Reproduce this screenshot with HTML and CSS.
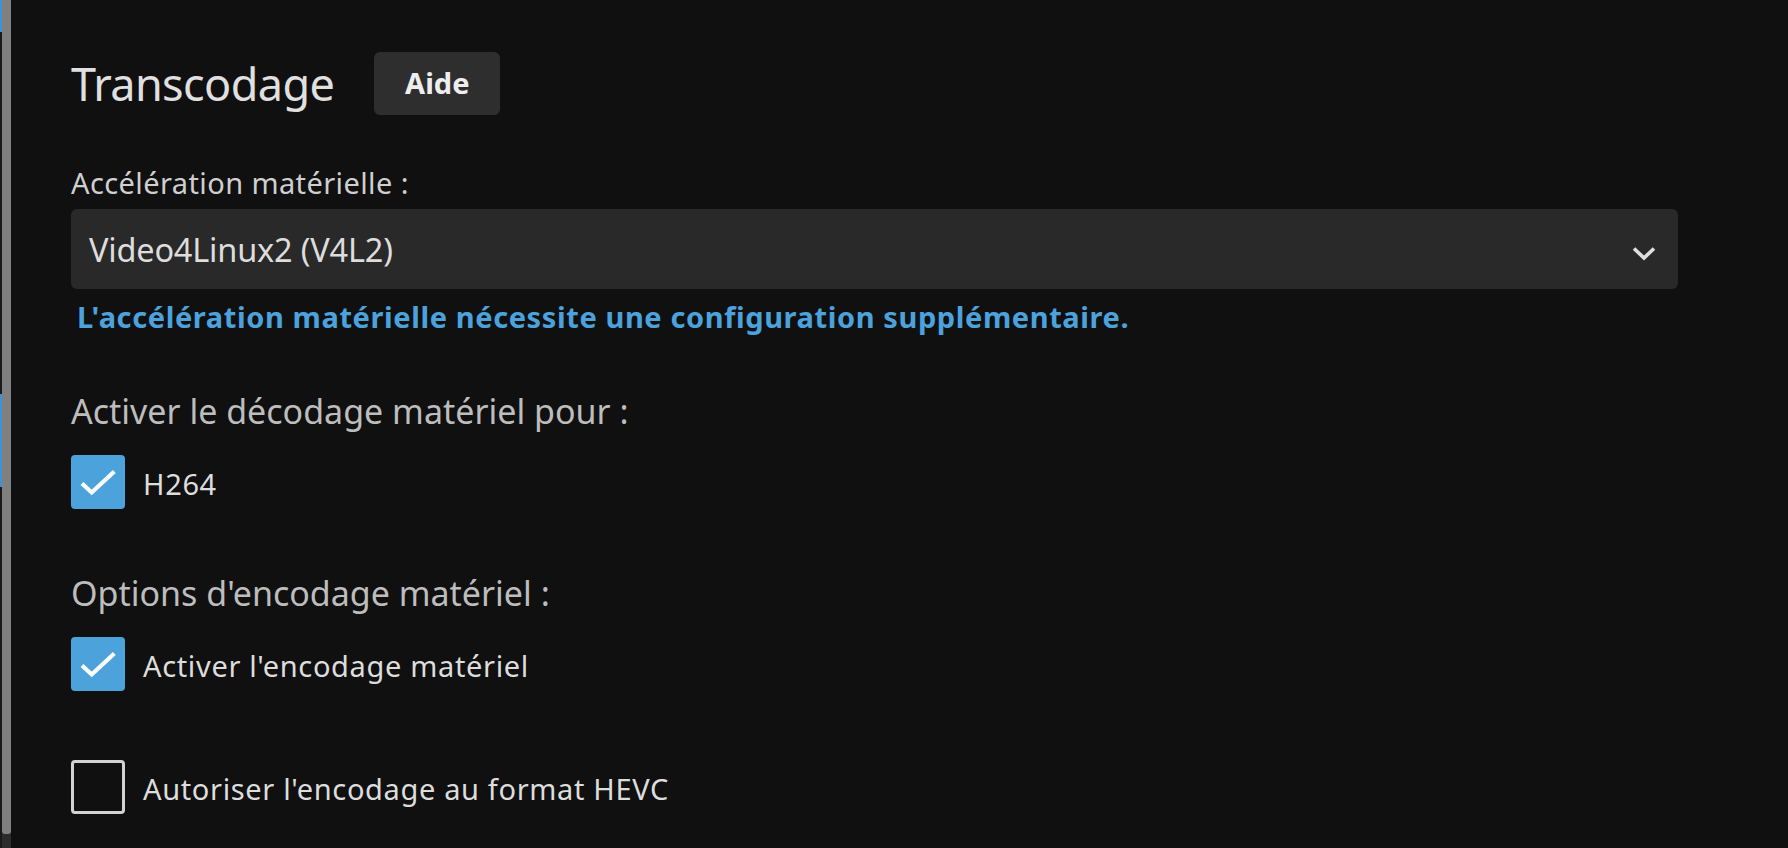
FILE: index.html
```html
<!DOCTYPE html>
<html lang="fr">
<head>
<meta charset="utf-8">
<title>Transcodage</title>
<link rel="stylesheet" href="styles.css">
</head>
<body>
<div class="shell">
  <div class="rail">
    <div class="rail-mark rail-mark-top"></div>
    <div class="rail-gap rail-gap-a"></div>
    <div class="rail-mark rail-mark-mid"></div>
    <div class="rail-gap"></div>
  </div>
  <div class="scrollbar">
    <div class="scroll-thumb"></div>
    <div class="scroll-track"></div>
  </div>
  <main class="content">
    <div class="title-row">
      <h2 class="section-title">Transcodage</h2>
      <button class="help-button" type="button">Aide</button>
    </div>

    <div class="field">
      <label class="field-label">Accélération matérielle :</label>
      <div class="select">
        <span class="select-value">Video4Linux2 (V4L2)</span>
        <svg class="select-arrow" width="24" height="15" viewBox="0 0 24 15" aria-hidden="true">
          <polyline points="2,2.5 12,12 22,2.5" fill="none" stroke="#dedede" stroke-width="3.6"/>
        </svg>
      </div>
      <div class="field-description">L'accélération matérielle nécessite une configuration supplémentaire.</div>
    </div>

    <fieldset class="group">
      <h3 class="group-title">Activer le décodage matériel pour :</h3>
      <div class="check-row">
        <span class="checkbox checked">
          <svg width="54" height="54" viewBox="0 0 54 54" aria-hidden="true">
            <polyline points="11,28.5 20.7,37.5 43.3,16.5" fill="none" stroke="#ffffff" stroke-width="4.2"/>
          </svg>
        </span>
        <span class="check-label">H264</span>
      </div>
    </fieldset>

    <fieldset class="group group-encoding">
      <h3 class="group-title">Options d'encodage matériel :</h3>
      <div class="check-row">
        <span class="checkbox checked">
          <svg width="54" height="54" viewBox="0 0 54 54" aria-hidden="true">
            <polyline points="11,28.5 20.7,37.5 43.3,16.5" fill="none" stroke="#ffffff" stroke-width="4.2"/>
          </svg>
        </span>
        <span class="check-label">Activer l'encodage matériel</span>
      </div>
      <div class="check-row check-row-spaced">
        <span class="checkbox unchecked"></span>
        <span class="check-label">Autoriser l'encodage au format HEVC</span>
      </div>
    </fieldset>
  </main>
</div>
</body>
</html>
```

FILE: styles.css
```css
html, body {
  margin: 0;
  padding: 0;
  background: #101010;
  height: 100%;
  overflow: hidden;
}

body {
  font-family: "Noto Sans", "Open Sans", sans-serif;
  color: #dddddd;
}

.shell {
  display: flex;
  height: 848px;
}

.rail {
  width: 2px;
  display: flex;
  flex-direction: column;
  background: #1a1a1a;
}

.rail-mark {
  background: #3d93d4;
}

.rail-mark-top {
  height: 32px;
}

.rail-gap-a {
  height: 280px;
}

.rail-mark-mid {
  height: 93px;
}

.rail-gap {
  flex: 1;
}

.scrollbar {
  width: 9px;
  display: flex;
  flex-direction: column;
  background: #2c2c2c;
}

.scroll-thumb {
  height: 834px;
  background: #808080;
  border-radius: 0 0 3px 3px;
}

.scroll-track {
  flex: 1;
}

.content {
  flex: 1;
  padding: 52px 110px 0 60px;
}

.title-row {
  display: flex;
  align-items: center;
  height: 63px;
}

.section-title {
  margin: 0;
  font-size: 45px;
  font-weight: 400;
  letter-spacing: -0.6px;
  line-height: 63px;
  color: #e0e0e0;
}

.help-button {
  margin-left: 40px;
  width: 126px;
  height: 63px;
  border: 0;
  border-radius: 6px;
  background: #2e2e2e;
  color: #eeeeee;
  font-family: "Noto Sans", "Open Sans", sans-serif;
  font-size: 29px;
  font-weight: 700;
  padding: 0 0 2px 0;
}

.field {
  margin-top: 48px;
}

.field-label {
  display: block;
  font-size: 29px;
  letter-spacing: 0.4px;
  line-height: 40px;
  color: #cfcfcf;
  margin-bottom: 6px;
}

.select {
  display: flex;
  align-items: center;
  justify-content: space-between;
  height: 80px;
  padding: 0 22px 0 18px;
  background: #292929;
  border-radius: 6px;
}

.select-value {
  font-size: 32.5px;
  letter-spacing: -0.2px;
  line-height: 80px;
  color: #dddddd;
  padding-top: 1px;
}

.select-arrow {
  margin-top: 9px;
}

.field-description {
  margin-top: 10px;
  padding-left: 6px;
  font-size: 29px;
  font-weight: 700;
  letter-spacing: 0.6px;
  line-height: 36px;
  color: #4ba2dc;
}

.group {
  margin: 54px 0 0 0;
  padding: 0;
  border: 0;
  min-width: 0;
}

.group-encoding {
  margin-top: 62px;
}

.group-title {
  margin: 0 0 22px 0;
  font-size: 34px;
  font-weight: 400;
  line-height: 44px;
  color: #bdbdbd;
}

.check-row {
  display: flex;
  align-items: flex-start;
  height: 54px;
}

.check-row-spaced {
  margin-top: 69px;
}

.checkbox {
  flex: none;
  width: 54px;
  height: 54px;
  box-sizing: border-box;
  border-radius: 4px;
}

.checkbox svg {
  display: block;
}

.checkbox.checked {
  background: #4ca3db;
}

.checkbox.unchecked {
  border: 3px solid #d2d2d2;
}

.check-label {
  margin-left: 18px;
  padding-top: 4px;
  font-size: 29px;
  letter-spacing: 0.65px;
  line-height: 50px;
  color: #dddddd;
}
```
